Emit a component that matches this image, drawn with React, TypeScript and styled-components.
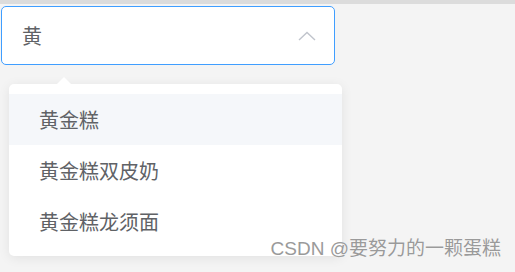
import React from "react";
import styled, { createGlobalStyle } from "styled-components";

const GlobalStyle = createGlobalStyle`
  html, body {
    margin: 0;
    padding: 0;
    background: #f4f4f4;
    font-family: "Noto Sans CJK SC", "Liberation Sans", sans-serif;
  }
`;

const SPage = styled.div`
  position: relative;
  width: 515px;
  height: 272px;
  overflow: hidden;
  border-top: 4px solid #dcdcdc;
  box-sizing: border-box;
  padding: 2px 0 0 1px;
`;

const SSelect = styled.div`
  width: 334px;
  height: 59px;
  box-sizing: border-box;
  border: 1px solid #409eff;
  border-radius: 5px;
  background: #fff;
  display: flex;
  align-items: center;
  justify-content: space-between;
  padding: 0 18px 0 20px;
`;

const SValue = styled.span`
  font-size: 20px;
  color: #606266;
`;

const SDropdown = styled.div`
  position: relative;
  margin: 19px 0 0 8px;
  width: 333px;
  box-sizing: border-box;
  padding: 10px 0 9px;
  background: #fff;
  border-radius: 5px;
  box-shadow: 0 2px 12px rgba(0, 0, 0, 0.08);

  &::before {
    content: "";
    position: absolute;
    top: -7px;
    left: 48px;
    width: 0;
    height: 0;
    border-left: 7px solid transparent;
    border-right: 7px solid transparent;
    border-bottom: 7px solid #fff;
  }
`;

const SItem = styled.div<{ active?: boolean }>`
  height: 51px;
  display: flex;
  align-items: center;
  padding-left: 30px;
  font-size: 20px;
  color: #606266;
  background: ${({ active }) => (active ? "#f5f7fa" : "#fff")};
`;

const SWatermark = styled.div`
  position: absolute;
  right: 14px;
  bottom: 12px;
  font-size: 19px;
  line-height: 22px;
  color: #9a9a9a;
  font-family: "Liberation Sans", "Noto Sans CJK SC", sans-serif;
  text-shadow: 0 0 1px #fff;
`;

const items = ["黄金糕", "黄金糕双皮奶", "黄金糕龙须面"];

const Arrow = () => (
  <svg width="18" height="10" viewBox="0 0 18 10">
    <path d="M1 9 L9 1.5 L17 9" fill="none" stroke="#c0c4cc" strokeWidth="1.4" />
  </svg>
);

const App: React.FC = () => {
  return (
    <SPage>
      <GlobalStyle />
      <SSelect>
        <SValue>黄</SValue>
        <Arrow />
      </SSelect>
      <SDropdown>
        {items.map((it, i) => (
          <SItem key={it} active={i === 0}>
            {it}
          </SItem>
        ))}
      </SDropdown>
      <SWatermark>CSDN @要努力的一颗蛋糕</SWatermark>
    </SPage>
  );
};

export default App;
